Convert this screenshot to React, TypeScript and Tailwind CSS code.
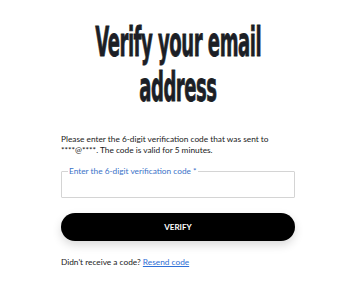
import { useState } from 'react'

export default function App() {
  const [code, setCode] = useState('')

  return (
    <div className="min-h-[297px] w-full bg-white font-['Lato','Noto_Sans',sans-serif] text-[#1a1a1a]">
      <div className="mx-auto flex w-[234px] flex-col pt-[20px]">
        {/* Heading */}
        <h1 className="flex flex-col items-center text-center font-['Liberation_Sans_Narrow','DejaVu_Sans_Condensed',sans-serif] text-[41px] font-bold leading-[45px] text-[#1c1f26] [-webkit-text-stroke:0.8px_#1c1f26]">
          <span className="inline-block origin-center scale-x-[0.49] whitespace-nowrap tracking-[-1px]">Verify your email</span>
          <span className="inline-block origin-center scale-x-[0.49] whitespace-nowrap tracking-[-1px]">address</span>
        </h1>

        <p className="mt-[24px] text-[8.3px] leading-[11px]">
          Please enter the 6-digit verification code that was sent to
          <br />
          ****@****. The code is valid for 5 minutes.
        </p>

        {/* Code field */}
        <fieldset className="mt-[11px] h-[31px] rounded-[1px] border border-[#d4d4d4] px-[6px] pb-0">
          <legend className="px-[1px] text-[8.3px] leading-[8px] text-[#3a72c8]">
            Enter the 6-digit verification code *
          </legend>
          <input
            value={code}
            onChange={(e) => setCode(e.target.value)}
            className="h-[20px] w-full bg-transparent text-[8px] outline-none"
          />
        </fieldset>

        <button className="mt-[15px] h-[28px] w-full rounded-full bg-black text-[8px] font-bold text-white shadow-[0_4px_10px_rgba(0,0,0,0.15)]">
          VERIFY
        </button>

        <p className="mt-[16px] text-[8.3px] leading-[10px]">
          Didn&apos;t receive a code?{' '}
          <a href="#" className="text-[#2f6fd6] underline">
            Resend code
          </a>
        </p>
      </div>
    </div>
  )
}
